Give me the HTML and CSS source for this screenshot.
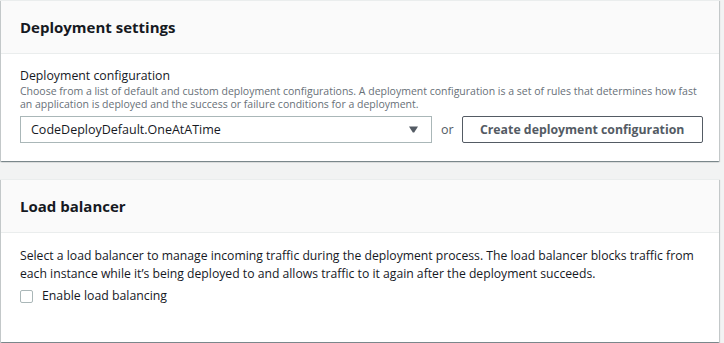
FILE: index.html
```html
<!DOCTYPE html>
<html lang="en">
<head>
    <meta charset="UTF-8">
    <title>Deployment settings</title>
    <link rel="stylesheet" href="styles.css">
</head>
<body>
    <div class="panel">
        <div class="panel-header">
            <h2>Deployment settings</h2>
        </div>
        <div class="panel-body">
            <div class="field-label">Deployment configuration</div>
            <div class="field-desc">Choose from a list of default and custom deployment configurations. A deployment configuration is a set of rules that determines how fast an application is deployed and the success or failure conditions for a deployment.</div>
            <div class="field-row">
                <div class="select">
                    <span>CodeDeployDefault.OneAtATime</span>
                    <svg class="caret" width="9" height="7" viewBox="0 0 9 7"><path d="M0 0.5 H9 L5.2 6.5 H3.8 Z" fill="#545b64"/></svg>
                </div>
                <span class="or">or</span>
                <button class="btn">Create deployment configuration</button>
            </div>
        </div>
    </div>

    <div class="panel">
        <div class="panel-header">
            <h2>Load balancer</h2>
        </div>
        <div class="panel-body lb-body">
            <p>Select a load balancer to manage incoming traffic during the deployment process. The load balancer blocks traffic from each instance while it’s being deployed to and allows traffic to it again after the deployment succeeds.</p>
            <label class="check">
                <span class="box"></span>
                Enable load balancing
            </label>
        </div>
    </div>
</body>
</html>
```

FILE: styles.css
```css
body {
    margin: 0;
    background-color: #f2f3f3;
    font-family: 'Open Sans', sans-serif;
    color: #16191f;
}

.panel {
    background-color: #FFFFFF;
    margin: 0 5px 18px 1px;
    border-top: 1px solid #eaeded;
    box-shadow: 0 1px 1px 0 rgba(0, 28, 36, 0.3), 1px 1px 1px 0 rgba(0, 28, 36, 0.15), -1px 1px 1px 0 rgba(0, 28, 36, 0.15);
}

.panel-header {
    background-color: #fafafa;
    border-bottom: 1px solid #eaeded;
    height: 52px;
    padding: 0 19px;
    display: flex;
    align-items: center;
}

.panel-header h2 {
    margin: 0;
    font-size: 15px;
    font-weight: 700;
}

.panel-body {
    padding: 13px 16px 18px 19px;
}

.field-label {
    font-size: 12.3px;
    line-height: 18px;
}

.field-desc {
    font-size: 10.5px;
    line-height: 13px;
    color: #687078;
}

.field-row {
    display: flex;
    align-items: center;
    margin-top: 5px;
}

.select {
    flex: 0 0 412px;
    height: 27px;
    box-sizing: border-box;
    border: 1px solid #aab7b8;
    display: flex;
    align-items: center;
    justify-content: space-between;
    padding: 0 13px 0 10px;
    font-size: 12.5px;
}

.or {
    font-size: 12.5px;
    color: #545b64;
    margin: 0 8px 0 9px;
}

.btn {
    flex: 0 0 241px;
    height: 27px;
    border: 1px solid #545b64;
    border-radius: 2px;
    background-color: #FFFFFF;
    color: #545b64;
    font-family: 'Open Sans', sans-serif;
    font-size: 12.3px;
    font-weight: 700;
}

.lb-body {
    padding-top: 14px;
    padding-bottom: 37px;
}

.lb-body p {
    margin: 0;
    font-size: 12.2px;
    line-height: 18px;
}

.check {
    display: flex;
    align-items: center;
    font-size: 12.3px;
    margin-top: 4px;
    line-height: 18px;
}

.box {
    width: 11px;
    height: 11px;
    border: 1px solid #aab7b8;
    border-radius: 2px;
    margin-right: 9px;
}
```
